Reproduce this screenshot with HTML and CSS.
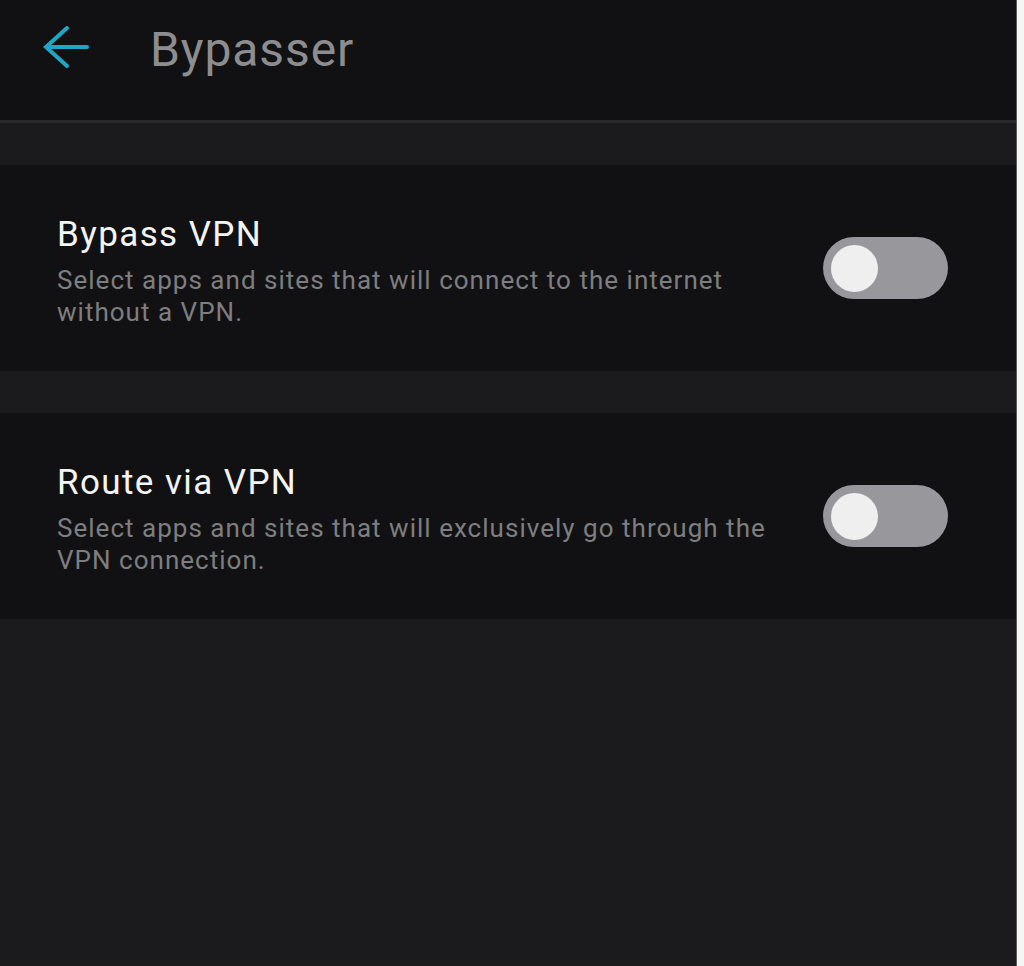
FILE: index.html
```html
<!DOCTYPE html>
<html lang="en">
<head>
<meta charset="utf-8">
<title>Bypasser</title>
<link rel="stylesheet" href="styles.css">
</head>
<body>
<div class="app">
  <header class="topbar">
    <svg class="back" width="52" height="48" viewBox="0 0 52 48" aria-hidden="true">
      <path d="M47 24 H6 M27 5 L6 24 L27 43" fill="none" stroke="#1fa6c4" stroke-width="4" stroke-linecap="round" stroke-linejoin="miter"/>
    </svg>
    <h1 class="title">Bypasser</h1>
  </header>
  <div class="divider"></div>
  <div class="band"></div>
  <section class="card">
    <div class="text">
      <div class="card-title">Bypass VPN</div>
      <div class="card-sub">Select apps and sites that will connect to the internet without a VPN.</div>
    </div>
    <div class="toggle"><div class="knob"></div></div>
  </section>
  <div class="band"></div>
  <section class="card">
    <div class="text">
      <div class="card-title">Route via VPN</div>
      <div class="card-sub">Select apps and sites that will exclusively go through the VPN connection.</div>
    </div>
    <div class="toggle"><div class="knob"></div></div>
  </section>
  <div class="rest"></div>
</div>
</body>
</html>
```

FILE: styles.css
```css
html, body {
  margin: 0;
  padding: 0;
  height: 100%;
}
body {
  background: #f6f6f6;
  font-family: Roboto, "Noto Sans", "Liberation Sans", sans-serif;
}
.app {
  width: 1016px;
  min-height: 966px;
  background: #1b1b1d;
  border-right: 1px solid #5c5c5e;
  display: flex;
  flex-direction: column;
}
.topbar {
  height: 120px;
  background: #111113;
  display: flex;
  align-items: flex-start;
  padding-left: 40px;
  box-sizing: border-box;
}
.back {
  display: block;
  margin-top: 23px;
}
.title {
  margin: 22px 0 0 58px;
  font-size: 48px;
  line-height: 56px;
  font-weight: 400;
  color: #8d8d8f;
  letter-spacing: 0.9px;
}
.divider {
  height: 3px;
  background: #2a2a2c;
}
.band {
  height: 42px;
  background: #1b1b1d;
}
.card {
  height: 206px;
  background: #111113;
  display: flex;
  padding: 0 68px 0 57px;
  box-sizing: border-box;
}
.text {
  flex: 1;
  padding-top: 50px;
  padding-right: 30px;
}
.card-title {
  font-size: 35px;
  line-height: 40px;
  color: #f4f4f4;
  letter-spacing: 1.4px;
}
.card-sub {
  margin-top: 9px;
  font-size: 26px;
  line-height: 32px;
  color: #7e7e80;
  letter-spacing: 1.02px;
}
.toggle {
  align-self: center;
  width: 125px;
  height: 62px;
  border-radius: 31px;
  background: #98979c;
  flex: none;
  display: flex;
  align-items: center;
  padding-left: 8px;
  box-sizing: border-box;
}
.knob {
  width: 47px;
  height: 47px;
  border-radius: 50%;
  background: #efefef;
}
.rest {
  flex: 1;
  background: #1b1b1d;
}
```
